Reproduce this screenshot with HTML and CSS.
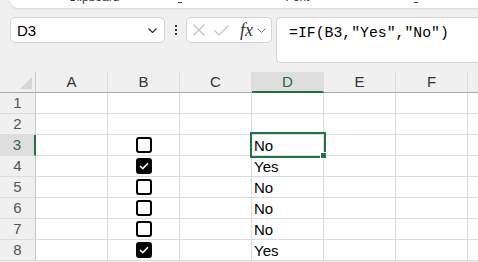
FILE: index.html
```html
<!DOCTYPE html>
<html lang="en">
<head>
    <meta charset="UTF-8">
    <title>Checkbox sheet</title>
    <link rel="stylesheet" href="styles.css">
</head>
<body>
    <div class="ribbon">
        <span class="group-label clipboard-label">Clipboard</span>
        <span class="launcher"></span>
        <span class="group-label font-label">Font</span>
        <span class="launcher"></span>
    </div>

    <div class="formula-row">
        <div class="name-box">
            <span>D3</span>
            <svg class="chevron" width="9" height="5" viewBox="0 0 9 5"><polyline points="0.5,0.5 4.5,4.5 8.5,0.5" fill="none" stroke="#333" stroke-width="1.2"/></svg>
        </div>
        <div class="more-dots"><i></i><i></i><i></i></div>
        <div class="fx-buttons">
            <svg width="12" height="12" viewBox="0 0 12 12"><path d="M0.5 0.5 L11.5 11.5 M11.5 0.5 L0.5 11.5" stroke="#c2c2c2" stroke-width="1.2"/></svg>
            <svg width="15" height="11" viewBox="0 0 15 11"><polyline points="0.5,5.5 5,10 14.5,0.5" fill="none" stroke="#c2c2c2" stroke-width="1.2"/></svg>
            <span class="fx">fx</span>
            <svg class="chevron" width="9" height="5" viewBox="0 0 9 5"><polyline points="0.5,0.5 4.5,4.5 8.5,0.5" fill="none" stroke="#777" stroke-width="1"/></svg>
        </div>
        <div class="formula-input">=IF(B3,"Yes","No")</div>
    </div>

    <div class="sheet">
        <div class="corner"><span class="corner-mark"></span></div>
        <div class="col-head">A</div>
        <div class="col-head">B</div>
        <div class="col-head">C</div>
        <div class="col-head active">D</div>
        <div class="col-head">E</div>
        <div class="col-head">F</div>
        <div class="col-head"></div>

        <div class="row-head">1</div>
        <div class="cell"></div><div class="cell"></div><div class="cell"></div><div class="cell"></div><div class="cell"></div><div class="cell"></div><div class="cell"></div>

        <div class="row-head">2</div>
        <div class="cell"></div><div class="cell"></div><div class="cell"></div><div class="cell"></div><div class="cell"></div><div class="cell"></div><div class="cell"></div>

        <div class="row-head active">3</div>
        <div class="cell"></div>
        <div class="cell box-cell"><span class="check"></span></div>
        <div class="cell"></div>
        <div class="cell selected">No<span class="selection"></span><span class="fill-handle"></span></div>
        <div class="cell"></div><div class="cell"></div><div class="cell"></div>

        <div class="row-head">4</div>
        <div class="cell"></div>
        <div class="cell box-cell"><span class="check checked"><svg width="10" height="8" viewBox="0 0 10 8"><polyline points="1,4 3.8,6.6 9,1.2" fill="none" stroke="#fff" stroke-width="1.6"/></svg></span></div>
        <div class="cell"></div>
        <div class="cell">Yes</div>
        <div class="cell"></div><div class="cell"></div><div class="cell"></div>

        <div class="row-head">5</div>
        <div class="cell"></div>
        <div class="cell box-cell"><span class="check"></span></div>
        <div class="cell"></div>
        <div class="cell">No</div>
        <div class="cell"></div><div class="cell"></div><div class="cell"></div>

        <div class="row-head">6</div>
        <div class="cell"></div>
        <div class="cell box-cell"><span class="check"></span></div>
        <div class="cell"></div>
        <div class="cell">No</div>
        <div class="cell"></div><div class="cell"></div><div class="cell"></div>

        <div class="row-head">7</div>
        <div class="cell"></div>
        <div class="cell box-cell"><span class="check"></span></div>
        <div class="cell"></div>
        <div class="cell">No</div>
        <div class="cell"></div><div class="cell"></div><div class="cell"></div>

        <div class="row-head">8</div>
        <div class="cell"></div>
        <div class="cell box-cell"><span class="check checked"><svg width="10" height="8" viewBox="0 0 10 8"><polyline points="1,4 3.8,6.6 9,1.2" fill="none" stroke="#fff" stroke-width="1.6"/></svg></span></div>
        <div class="cell"></div>
        <div class="cell">Yes</div>
        <div class="cell"></div><div class="cell"></div><div class="cell"></div>
    </div>
</body>
</html>
```

FILE: styles.css
```css
html, body {
    margin: 0;
    padding: 0;
    overflow: hidden;
}

body {
    width: 478px;
    height: 262px;
    background-color: #f0f0f0;
    font-family: "Liberation Sans", Arial, sans-serif;
    color: #000;
}

/* bottom edge of the ribbon, labels cut off at the top */
.ribbon {
    display: flex;
    align-items: flex-start;
    height: 8px;
    margin-left: 10px;
    width: 520px;
    background-color: #fff;
    border-bottom-left-radius: 8px;
    box-shadow: 0 1px 2px rgba(0, 0, 0, 0.12);
    overflow: hidden;
}

.group-label {
    flex-shrink: 0;
    font-size: 12px;
    line-height: 12px;
    margin-top: -9px;
    color: #333;
    white-space: nowrap;
}

.clipboard-label {
    margin-left: 58px;
}

.font-label {
    margin-left: 103px;
}

.launcher {
    flex-shrink: 0;
    width: 4px;
    height: 0;
    margin-top: 2px;
    margin-left: 59px;
    border-top: 1px solid #444;
}

.font-label + .launcher {
    margin-left: 105px;
}

/* name box + formula bar */
.formula-row {
    display: flex;
    align-items: flex-start;
    margin-top: 9px;
    margin-left: 10px;
    width: 520px;
}

.formula-row > * {
    flex-shrink: 0;
}

.name-box {
    box-sizing: border-box;
    display: flex;
    align-items: center;
    justify-content: space-between;
    width: 155px;
    height: 26px;
    padding: 0 7px 0 6px;
    background-color: #fff;
    border: 1px solid #d3d3d3;
    border-radius: 5px;
    font-size: 15px;
}

.more-dots {
    display: flex;
    flex-direction: column;
    align-items: center;
    gap: 2px;
    width: 21px;
    padding-top: 8px;
}

.more-dots i {
    display: block;
    width: 2px;
    height: 2px;
    background-color: #333;
}

.fx-buttons {
    box-sizing: border-box;
    display: flex;
    align-items: center;
    width: 86px;
    height: 26px;
    padding-left: 6px;
    gap: 9px;
    background-color: #fff;
    border: 1px solid #d3d3d3;
    border-radius: 5px;
}

.fx {
    font-family: "Liberation Serif", "Times New Roman", serif;
    font-style: italic;
    font-size: 18px;
    color: #333;
    margin-left: 2px;
    margin-right: -5px;
}

.formula-input {
    box-sizing: border-box;
    width: 230px;
    height: 46px;
    margin-left: 4px;
    padding: 5px 0 0 12px;
    background-color: #fff;
    border: 1px solid #d3d3d3;
    border-right: none;
    border-radius: 5px 0 0 5px;
    font-family: "Liberation Mono", "Courier New", monospace;
    font-size: 14.8px;
    line-height: 20px;
    white-space: nowrap;
}

/* worksheet grid */
.sheet {
    display: grid;
    grid-template-columns: 36px repeat(7, 72px);
    grid-auto-rows: 21px;
    margin-top: 9px;
    width: 540px;
    background-color: #fff;
}

.corner,
.col-head,
.row-head,
.cell {
    box-sizing: border-box;
    line-height: 20px;
    font-size: 15px;
}

.corner {
    display: flex;
    align-items: flex-end;
    justify-content: flex-end;
    padding: 0 3px 3px 0;
    background-color: #f0f0f0;
    border-right: 1px solid #c8c8c8;
    border-bottom: 1px solid #a8a8a8;
}

.corner-mark {
    width: 0;
    height: 0;
    border-left: 12px solid transparent;
    border-bottom: 12px solid #d6d6d6;
}

.col-head {
    text-align: center;
    color: #333;
    background-color: #f0f0f0;
    border-right: 1px solid #dcdcdc;
    border-bottom: 1px solid #a8a8a8;
}

.col-head.active {
    background-color: #dedede;
    color: #1f6b43;
    border-bottom: 2px solid #217346;
}

.row-head {
    text-align: center;
    color: #555;
    background-color: #f0f0f0;
    border-right: 1px solid #c8c8c8;
    border-bottom: 1px solid #dcdcdc;
}

.row-head.active {
    background-color: #dedede;
    color: #1f6b43;
    border-right: 2px solid #217346;
}

.cell {
    padding: 1px 0 0 2px;
    border-right: 1px solid #dcdcdc;
    border-bottom: 1px solid #dcdcdc;
    white-space: nowrap;
}

.box-cell {
    display: flex;
    align-items: center;
    justify-content: center;
    padding: 0 0 0 1px;
}

.check {
    box-sizing: border-box;
    display: flex;
    align-items: center;
    justify-content: center;
    width: 16px;
    height: 16px;
    border: 2px solid #000;
    border-radius: 3px;
    background-color: #fff;
}

.check.checked {
    background-color: #000;
}

/* active cell outline */
.selected {
    position: relative;
}

.selection {
    position: absolute;
    top: -3px;
    left: -2px;
    right: -3px;
    bottom: -3px;
    border: 2px solid #217346;
}

.fill-handle {
    position: absolute;
    right: -4px;
    bottom: -4px;
    width: 5px;
    height: 5px;
    background-color: #217346;
    border: 1px solid #fff;
}
```
